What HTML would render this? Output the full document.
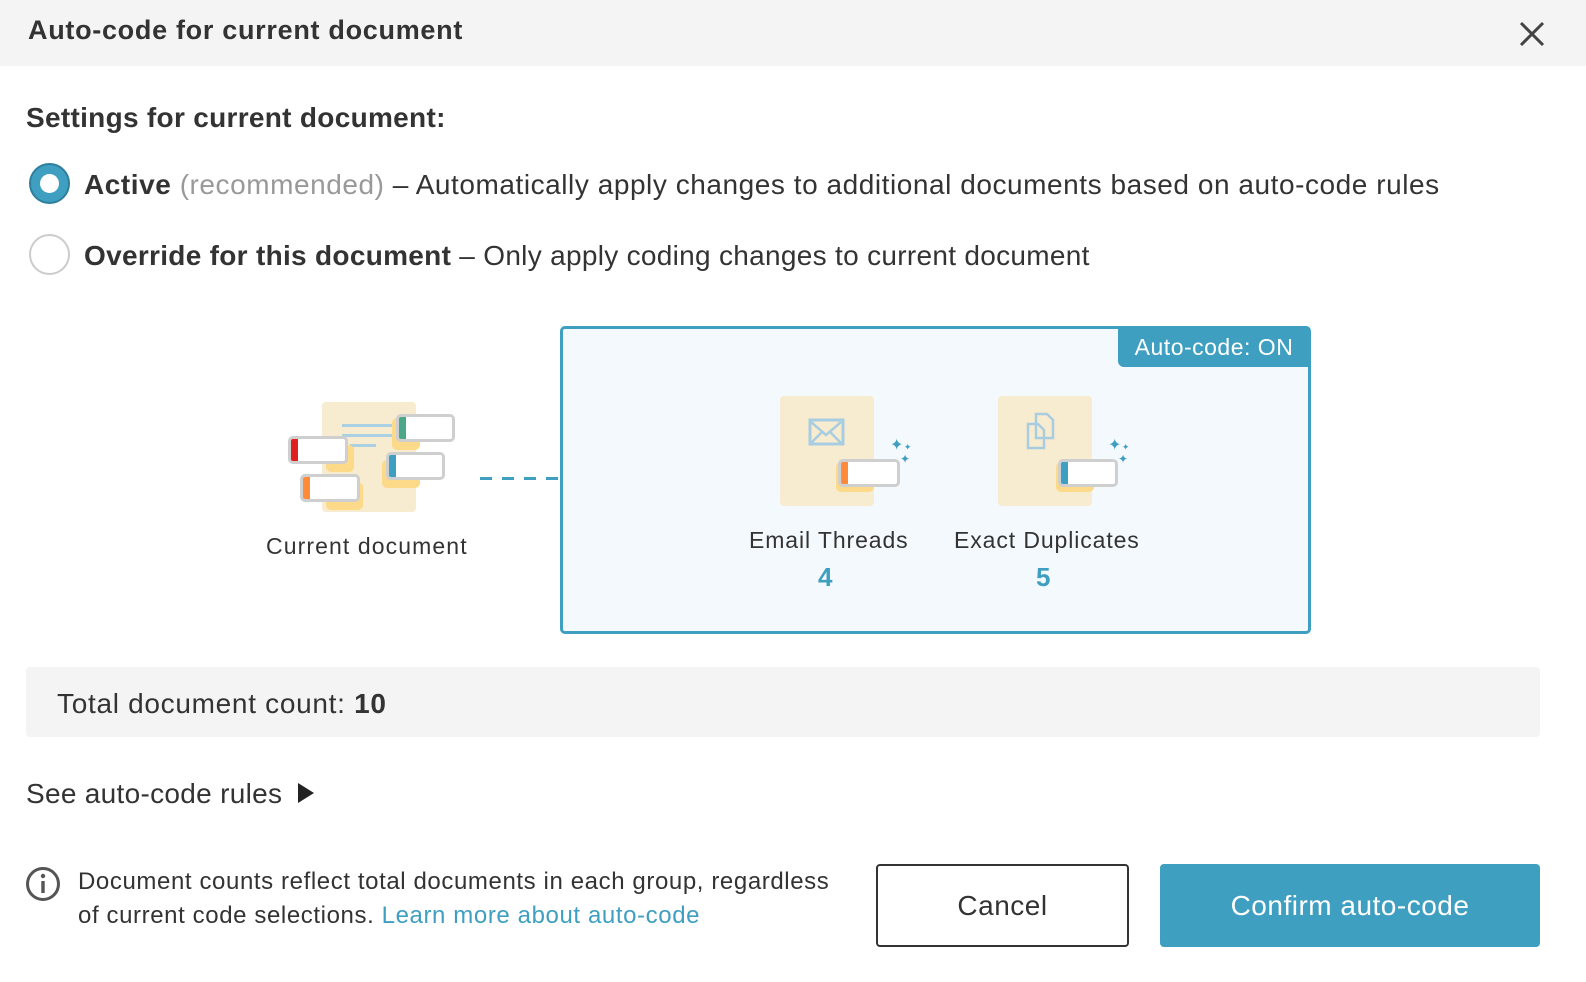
<!DOCTYPE html>
<html><head><meta charset="utf-8"><style>
*{box-sizing:border-box;margin:0;padding:0}
body{width:1586px;height:982px;background:#fff;font-family:"Liberation Sans",sans-serif;color:#333;position:relative;overflow:hidden;letter-spacing:0.5px}
.a{position:absolute}
.tag{position:absolute;background:#fff;border:3px solid #cfcfcf;border-radius:5px;overflow:hidden}
.tag i{position:absolute;left:0;top:0;bottom:0;width:7px}
.sh{position:absolute;background:#fdd98a;border-radius:5px}
</style></head><body>
<div class="a" style="left:0;top:0;width:1586px;height:66px;background:#f4f4f4"></div>
<div class="a" style="left:28px;top:15px;font-size:27px;font-weight:bold;color:#333;letter-spacing:0.7px">Auto-code for current document</div>
<svg class="a" style="left:1518px;top:20px" width="28" height="28"><path d="M3 3L25 25M25 3L3 25" stroke="#444" stroke-width="3"/></svg>

<div class="a" style="left:26px;top:102px;font-size:28px;font-weight:bold;letter-spacing:0.3px">Settings for current document:</div>
<div class="a" style="left:29px;top:163px;width:41px;height:41px;border-radius:50%;background:#3f9fc0;border:2px solid #2d7f9c"></div>
<div class="a" style="left:40px;top:174px;width:19px;height:19px;border-radius:50%;background:#fff"></div>
<div class="a" style="left:84px;top:169px;font-size:28px;letter-spacing:0.55px"><b>Active</b> <span style="color:#999">(recommended)</span> – Automatically apply changes to additional documents based on auto-code rules</div>
<div class="a" style="left:29px;top:234px;width:41px;height:41px;border-radius:50%;border:2px solid #ccc"></div>
<div class="a" style="left:84px;top:240px;font-size:28px;letter-spacing:0.3px"><b>Override for this document</b> – Only apply coding changes to current document</div>

<div class="a" style="left:322px;top:402px;width:94px;height:110px;background:#f8ecd0;border-radius:4px"></div>
<div class="a" style="left:342px;top:424px;width:56px;height:3px;background:#a9d0e3"></div>
<div class="a" style="left:342px;top:434px;width:56px;height:3px;background:#a9d0e3"></div>
<div class="a" style="left:350px;top:444px;width:26px;height:3px;background:#a9d0e3"></div>
<div class="sh" style="left:392px;top:418px;width:28px;height:32px"></div>
<div class="tag" style="left:396px;top:414px;width:59px;height:28px"><i style="background:#4aa78a"></i></div>
<div class="sh" style="left:326px;top:445px;width:28px;height:27px"></div>
<div class="tag" style="left:288px;top:436px;width:60px;height:28px"><i style="background:#e02020"></i></div>
<div class="sh" style="left:382px;top:460px;width:38px;height:28px"></div>
<div class="tag" style="left:386px;top:452px;width:59px;height:28px"><i style="background:#3f9fc0"></i></div>
<div class="sh" style="left:326px;top:482px;width:37px;height:28px"></div>
<div class="tag" style="left:300px;top:474px;width:60px;height:28px"><i style="background:#ff8a3c"></i></div>
<div class="a" style="left:266px;top:533px;font-size:23px;color:#333;letter-spacing:1.1px">Current document</div>
<div class="a" style="left:480px;top:477px;width:82px;height:3px;background:repeating-linear-gradient(90deg,#3f9fc0 0 12px,transparent 12px 22px)"></div>

<div class="a" style="left:560px;top:326px;width:751px;height:308px;border:3px solid #3f9fc0;border-radius:5px;background:#f3f9fc"></div>
<div class="a" style="left:1118px;top:327px;width:192px;height:40px;background:#3f9fc0;border-radius:0 3px 0 6px;color:#fff;font-size:23px;line-height:40px;text-align:center">Auto-code: ON</div>

<div class="a" style="left:780px;top:396px;width:94px;height:110px;background:#f8ecd0;border-radius:4px"></div>
<svg class="a" style="left:808px;top:418px" width="38" height="28"><rect x="2" y="2" width="33" height="24" fill="none" stroke="#a9cde0" stroke-width="3"/><path d="M3 4L18 17L33 4M3 25L14 14M33 25L22 14" fill="none" stroke="#a9cde0" stroke-width="2.5"/></svg>
<div class="sh" style="left:836px;top:462px;width:38px;height:30px"></div>
<div class="tag" style="left:838px;top:459px;width:62px;height:28px"><i style="background:#ff8a3c"></i></div>
<div class="a" style="left:890px;top:440px;color:#3f9fc0;font-size:16px;line-height:12px">✦<span style="font-size:9px">✦</span><br><span style="padding-left:10px;font-size:12px">✦</span></div>
<div class="a" style="left:749px;top:527px;font-size:23px;letter-spacing:0.9px">Email Threads</div>
<div class="a" style="left:818px;top:562px;font-size:26px;font-weight:bold;color:#3f9fc0">4</div>

<div class="a" style="left:998px;top:396px;width:94px;height:110px;background:#f8ecd0;border-radius:4px"></div>
<svg class="a" style="left:1026px;top:412px" width="36" height="38"><path d="M10 2H21L27 8V26H10Z M2 12H12L18 18V36H2Z" fill="none" stroke="#a9cde0" stroke-width="2.5"/></svg>
<div class="sh" style="left:1056px;top:462px;width:38px;height:30px"></div>
<div class="tag" style="left:1058px;top:459px;width:60px;height:28px"><i style="background:#3f9fc0"></i></div>
<div class="a" style="left:1108px;top:440px;color:#3f9fc0;font-size:16px;line-height:12px">✦<span style="font-size:9px">✦</span><br><span style="padding-left:10px;font-size:12px">✦</span></div>
<div class="a" style="left:954px;top:527px;font-size:23px;letter-spacing:0.9px">Exact Duplicates</div>
<div class="a" style="left:1036px;top:562px;font-size:26px;font-weight:bold;color:#3f9fc0">5</div>

<div class="a" style="left:26px;top:667px;width:1514px;height:70px;background:#f4f4f4;border-radius:4px"></div>
<div class="a" style="left:57px;top:688px;font-size:28px;letter-spacing:0.7px">Total document count: <b>10</b></div>

<div class="a" style="left:26px;top:778px;font-size:28px;letter-spacing:0.3px">See auto-code rules</div>
<svg class="a" style="left:297px;top:782px" width="18" height="22"><path d="M1 1L17 11L1 21Z" fill="#222"/></svg>

<svg class="a" style="left:25px;top:866px" width="36" height="36"><circle cx="18" cy="18" r="15.5" fill="none" stroke="#555" stroke-width="3"/><rect x="16.3" y="15" width="3.4" height="12" fill="#555"/><circle cx="18" cy="10" r="2.2" fill="#555"/></svg>
<div class="a" style="left:78px;top:865px;font-size:24px;line-height:34px;color:#333;letter-spacing:0.6px">Document counts reflect total documents in each group, regardless<br>of current code selections. <span style="color:#3f9fc0">Learn more about auto-code</span></div>

<div class="a" style="left:876px;top:864px;width:253px;height:83px;border:2px solid #333;border-radius:4px;font-size:28px;text-align:center;line-height:79px">Cancel</div>
<div class="a" style="left:1160px;top:864px;width:380px;height:83px;background:#3f9fc0;border-radius:4px;color:#fff;font-size:28px;text-align:center;line-height:83px">Confirm auto-code</div>
</body></html>
